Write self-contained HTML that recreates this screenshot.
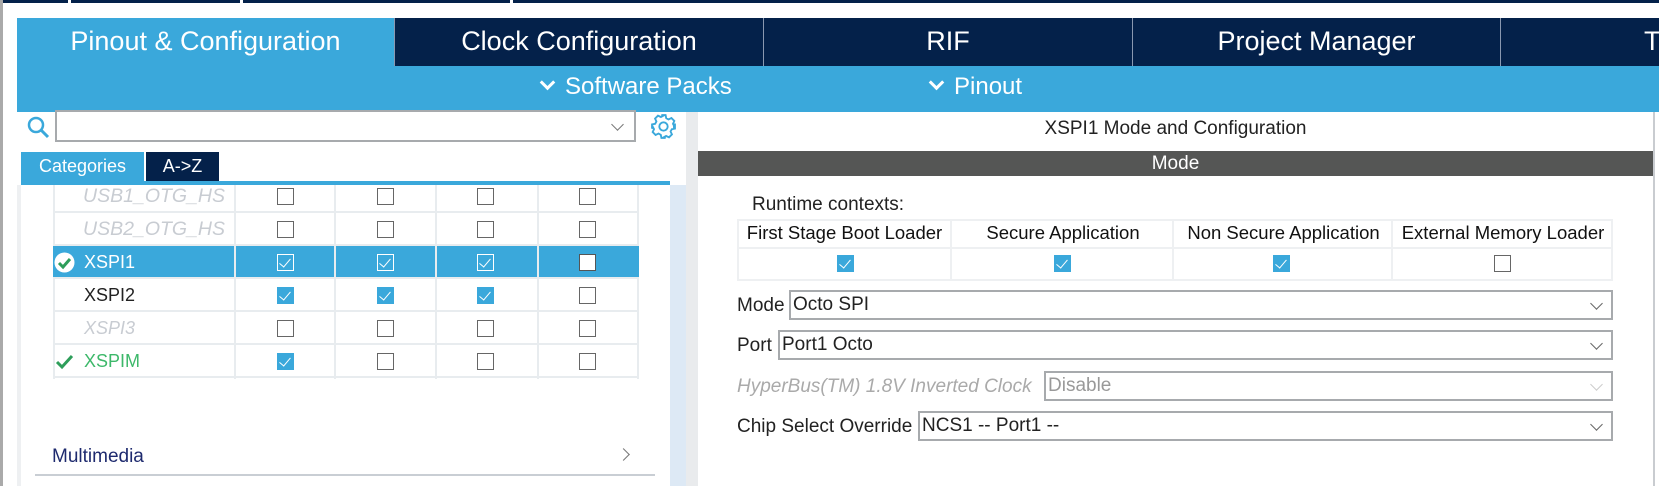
<!DOCTYPE html>
<html><head><meta charset="utf-8"><style>
*{margin:0;padding:0;box-sizing:border-box}
body{width:1659px;height:486px;background:#fff;position:relative;overflow:hidden;font-family:"Liberation Sans",Arial,sans-serif}
.a{position:absolute}
.tab{position:absolute;top:18px;height:48px;background:#04214a;color:#fff;font-size:27px;line-height:46px;text-align:center;border-left:1px solid #8a98b0}
.cb{position:absolute;width:17px;height:17px;border:1.5px solid #666;background:#fff}
.cb.on{background:#3aa8db;border:none}
.cb.on:after{content:"";position:absolute;left:5px;top:2px;width:5px;height:10px;border:solid #fff;border-width:0 1.5px 1.5px 0;transform:rotate(40deg)}
.cb.w{border:1.5px solid #fff;background:#3aa8db}
.cb.w:after{content:"";position:absolute;left:4px;top:1px;width:5px;height:10px;border:solid #fff;border-width:0 1.5px 1.5px 0;transform:rotate(40deg)}
.row{position:absolute;left:53px;width:586px;height:33px;border-bottom:2px solid #e8ecef}
.lbl{position:absolute;font-size:18px;line-height:33px}
.sel{position:absolute;height:30px;border:2px solid #a7aaad;background:#fff;font-size:19px;line-height:26px;padding-left:2px;color:#222}
.chev{position:absolute;right:10px;top:7px;width:9px;height:9px;border:solid #666;border-width:0 1.5px 1.5px 0;transform:rotate(45deg)}
.fl{position:absolute;font-size:19px;color:#222;line-height:20px}
.hc{position:absolute;top:219px;height:28px;font-size:18.5px;line-height:28px;text-align:center;color:#111;border-right:2px solid #eef0f2;white-space:nowrap}
</style></head><body>
<div class="a" style="left:0;top:0;width:1659px;height:3px;background:#04214a"></div>
<div class="a" style="left:68px;top:0;width:3px;height:3px;background:#fff"></div>
<div class="a" style="left:240px;top:0;width:3px;height:3px;background:#fff"></div>
<div class="a" style="left:510px;top:0;width:3px;height:3px;background:#fff"></div>
<div class="a" style="left:0;top:0;width:3px;height:486px;background:#aaa"></div>
<div class="tab" style="left:17px;width:377px;background:#3aa8db;border:none">Pinout &amp; Configuration</div>
<div class="tab" style="left:394px;width:369px">Clock Configuration</div>
<div class="tab" style="left:763px;width:369px">RIF</div>
<div class="tab" style="left:1132px;width:368px">Project Manager</div>
<div class="tab" style="left:1500px;width:159px;text-align:left;padding-left:143px">T</div>
<div class="a" style="left:17px;top:66px;width:1642px;height:46px;background:#3aa8db"></div>
<div class="a" style="left:540px;top:72px;color:#fff;font-size:24px;line-height:30px"><span style="display:inline-block;width:11px;height:11px;border:solid #fff;border-width:0 3px 3px 0;transform:rotate(45deg);margin:0 12px 6px 2px"></span>Software Packs</div>
<div class="a" style="left:929px;top:72px;color:#fff;font-size:24px;line-height:30px"><span style="display:inline-block;width:11px;height:11px;border:solid #fff;border-width:0 3px 3px 0;transform:rotate(45deg);margin:0 12px 6px 2px"></span>Pinout</div>
<div class="a" style="left:17px;top:185px;width:4px;height:301px;background:#eef0f2"></div>
<svg class="a" style="left:27px;top:116px" width="24" height="24"><circle cx="9" cy="9" r="7" fill="none" stroke="#3aa8db" stroke-width="2.5"/><line x1="14" y1="14" x2="21" y2="21" stroke="#3aa8db" stroke-width="3"/></svg>
<div class="a" style="left:55px;top:110px;width:581px;height:32px;border:2px solid #a7aaad"><div class="chev" style="top:8px;right:12px;border-color:#777"></div></div>
<svg class="a" style="left:651px;top:114px" width="25" height="25" viewBox="0 0 24 24"><path d="M10 1h4l.6 3 2.2 1.2 2.8-1.3 2.8 2.8-1.3 2.8L22.3 11.7l-.3 .3v0L22 10l1 0v4l-3 .6-1.2 2.2 1.3 2.8-2.8 2.8-2.8-1.3L12.3 22.3 14 23h-4l-.6-3-2.2-1.2-2.8 1.3-2.8-2.8 1.3-2.8L1.7 12.3 1 14v-4l3-.6 1.2-2.2L3.9 4.4l2.8-2.8 2.8 1.3L11.7 1.7z" fill="none" stroke="#3aa8db" stroke-width="1.8"/><circle cx="12" cy="12" r="4" fill="none" stroke="#3aa8db" stroke-width="1.8"/></svg>
<div class="a" style="left:21px;top:152px;width:123px;height:30px;background:#3aa8db;color:#fff;font-size:18px;line-height:28px;text-align:center">Categories</div>
<div class="a" style="left:146px;top:152px;width:73px;height:30px;background:#04214a;color:#fff;font-size:18px;line-height:28px;text-align:center">A-&gt;Z</div>
<div class="a" style="left:21px;top:181px;width:649px;height:4px;background:#3aa8db"></div>
<div class="a" style="left:670px;top:185px;width:16px;height:301px;background:#dde9f5"></div>
<div class="a" style="left:686px;top:112px;width:12px;height:374px;background:#e9ebed"></div>
<div class="a" style="left:53px;top:185px;width:2px;height:194px;background:#e8ecef"></div>
<div class="a" style="left:637px;top:185px;width:2px;height:194px;background:#e8ecef"></div>
<div class="row" style="top:180px"></div>
<div class="row" style="top:213px"></div>
<div class="row" style="top:246px;background:#3aa8db"></div>
<div class="row" style="top:279px"></div>
<div class="row" style="top:312px"></div>
<div class="row" style="top:345px"></div>
<div class="a" style="left:234px;top:185px;width:2px;height:194px;background:#e8ecef"></div>
<div class="a" style="left:334px;top:185px;width:2px;height:194px;background:#e8ecef"></div>
<div class="a" style="left:435px;top:185px;width:2px;height:194px;background:#e8ecef"></div>
<div class="a" style="left:537px;top:185px;width:2px;height:194px;background:#e8ecef"></div>
<div class="lbl" style="left:60px;top:180px;color:#c8ccd2;font-style:italic;text-align:right;width:165px;font-size:19.5px">USB1_OTG_HS</div>
<div class="lbl" style="left:60px;top:213px;color:#c8ccd2;font-style:italic;text-align:right;width:165px;font-size:19.5px">USB2_OTG_HS</div>
<svg class="a" style="left:54px;top:252px" width="21" height="21"><circle cx="10.5" cy="10.5" r="10" fill="#fff"/><path d="M5 11l4 4 7-8" fill="none" stroke="#2e9e5a" stroke-width="3"/></svg>
<div class="lbl" style="left:84px;top:246px;color:#fff">XSPI1</div>
<div class="lbl" style="left:84px;top:279px;color:#222">XSPI2</div>
<div class="lbl" style="left:84px;top:312px;color:#c8ccd2;font-style:italic">XSPI3</div>
<svg class="a" style="left:55px;top:352px" width="20" height="20"><path d="M2 10l5 5 10-11" fill="none" stroke="#2e9e5a" stroke-width="3"/></svg>
<div class="lbl" style="left:84px;top:345px;color:#3db86a">XSPIM</div>
<div class="cb" style="left:277px;top:188px"></div><div class="cb" style="left:377px;top:188px"></div><div class="cb" style="left:477px;top:188px"></div><div class="cb" style="left:579px;top:188px"></div>
<div class="cb" style="left:277px;top:221px"></div><div class="cb" style="left:377px;top:221px"></div><div class="cb" style="left:477px;top:221px"></div><div class="cb" style="left:579px;top:221px"></div>
<div class="cb w" style="left:277px;top:254px"></div><div class="cb w" style="left:377px;top:254px"></div><div class="cb w" style="left:477px;top:254px"></div><div class="cb" style="left:579px;top:254px;border-color:#555"></div>
<div class="cb on" style="left:277px;top:287px"></div><div class="cb on" style="left:377px;top:287px"></div><div class="cb on" style="left:477px;top:287px"></div><div class="cb" style="left:579px;top:287px"></div>
<div class="cb" style="left:277px;top:320px"></div><div class="cb" style="left:377px;top:320px"></div><div class="cb" style="left:477px;top:320px"></div><div class="cb" style="left:579px;top:320px"></div>
<div class="cb on" style="left:277px;top:353px"></div><div class="cb" style="left:377px;top:353px"></div><div class="cb" style="left:477px;top:353px"></div><div class="cb" style="left:579px;top:353px"></div>
<div class="a" style="left:52px;top:446px;font-size:19px;color:#1e2a6e">Multimedia</div>
<div class="a" style="left:619px;top:450px;width:9px;height:9px;border:solid #777;border-width:1.5px 1.5px 0 0;transform:rotate(45deg)"></div>
<div class="a" style="left:35px;top:474px;width:620px;height:2px;background:#c9ced4"></div>
<div class="a" style="left:1653px;top:112px;width:2px;height:374px;background:#c9ccd0"></div>
<div class="a" style="left:698px;top:118px;width:955px;text-align:center;font-size:19px;color:#222">XSPI1 Mode and Configuration</div>
<div class="a" style="left:698px;top:151px;width:955px;height:25px;background:#555655;color:#fff;font-size:19px;line-height:25px;text-align:center">Mode</div>
<div class="fl" style="left:752px;top:195px">Runtime contexts:</div>
<div class="a" style="left:737px;top:219px;width:876px;height:62px;border:2px solid #eef0f2"></div>
<div class="a" style="left:737px;top:247px;width:876px;height:2px;background:#eef0f2"></div>
<div class="hc" style="left:737px;width:215px;height:62px"></div>
<div class="hc" style="left:952px;width:222px;height:62px"></div>
<div class="hc" style="left:1174px;width:219px;height:62px"></div>
<div class="hc" style="left:737px;width:215px;border:none">First Stage Boot Loader</div>
<div class="hc" style="left:952px;width:222px;border:none">Secure Application</div>
<div class="hc" style="left:1174px;width:219px;border:none">Non Secure Application</div>
<div class="hc" style="left:1393px;width:220px;border:none">External Memory Loader</div>
<div class="cb on" style="left:837px;top:255px"></div>
<div class="cb on" style="left:1054px;top:255px"></div>
<div class="cb on" style="left:1273px;top:255px"></div>
<div class="cb" style="left:1494px;top:255px"></div>
<div class="fl" style="left:737px;top:296px">Mode</div>
<div class="sel" style="left:789px;top:290px;width:824px">Octo SPI<div class="chev"></div></div>
<div class="fl" style="left:737px;top:336px">Port</div>
<div class="sel" style="left:778px;top:330px;width:835px">Port1 Octo<div class="chev"></div></div>
<div class="fl" style="left:737px;top:377px;color:#aaa;font-style:italic">HyperBus(TM) 1.8V Inverted Clock</div>
<div class="sel" style="left:1044px;top:371px;width:569px;color:#999">Disable<div class="chev" style="border-color:#ccc"></div></div>
<div class="fl" style="left:737px;top:417px">Chip Select Override</div>
<div class="sel" style="left:918px;top:411px;width:695px">NCS1 -- Port1 --<div class="chev"></div></div>
</body></html>
